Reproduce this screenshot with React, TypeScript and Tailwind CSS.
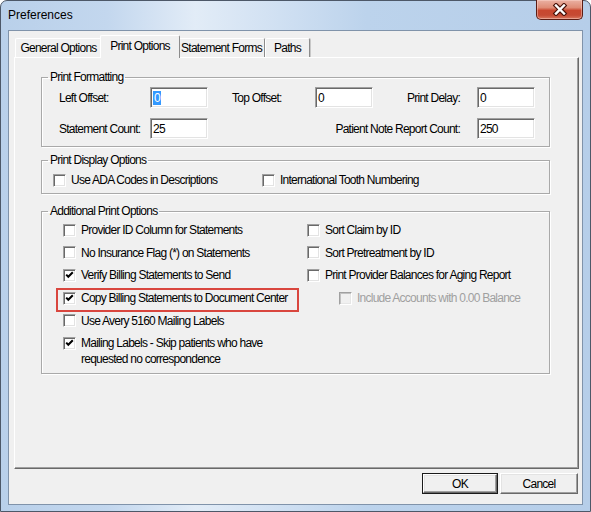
import React from 'react';

const ui = "font-['Liberation_Sans',Arial,sans-serif] text-[12px] tracking-[-0.75px] whitespace-nowrap text-black";

function Check({ checked, disabled }: { checked?: boolean; disabled?: boolean }) {
  return (
    <span
      className={`flex h-[13px] w-[13px] shrink-0 items-center justify-center border border-t-[#a0a0a0] border-l-[#a0a0a0] border-b-white border-r-white ${
        disabled
          ? 'bg-[#f0f0f0] shadow-[inset_1px_1px_0_#c2c2c2,inset_-1px_-1px_0_#e6e6e6]'
          : 'bg-white shadow-[inset_1px_1px_0_#696969,inset_-1px_-1px_0_#e3e3e3]'
      }`}
    >
      {checked && (
        <svg width="9" height="9" viewBox="0 0 9 9">
          <path d="M1.2 3.6 L3.3 5.8 L7.8 1.3" fill="none" stroke="#000" strokeWidth="2" />
        </svg>
      )}
    </span>
  );
}

function Field({ value, selected }: { value: string; selected?: boolean }) {
  return (
    <div className="flex h-[21px] w-[58px] shrink-0 items-center border border-t-[#a0a0a0] border-l-[#a0a0a0] border-b-white border-r-white bg-white pl-[2px] shadow-[inset_1px_1px_0_#696969,inset_-1px_-1px_0_#e3e3e3]">
      {selected ? (
        <span className="bg-[#3399ff] px-[1px] leading-[14px] text-white">{value}</span>
      ) : (
        <span className="leading-[14px]">{value}</span>
      )}
    </div>
  );
}

function Option({
  label,
  checked,
  disabled,
  className = '',
}: {
  label: React.ReactNode;
  checked?: boolean;
  disabled?: boolean;
  className?: string;
}) {
  return (
    <div className={`flex h-[22.6px] items-center gap-[5px] ${className}`}>
      <Check checked={checked} disabled={disabled} />
      <span className={`leading-[16px] ${disabled ? 'text-[#a0a0a0]' : ''}`}>{label}</span>
    </div>
  );
}

function Group({
  title,
  className = '',
  children,
}: {
  title: string;
  className?: string;
  children: React.ReactNode;
}) {
  return (
    <fieldset className={`ml-[26px] w-[509px] border border-[#a9a9a9] shadow-[inset_1px_1px_0_#fff,1px_1px_0_#fff] ${className}`}>
      <legend className="ml-[6px] px-[2px] leading-[14px]">{title}</legend>
      {children}
    </fieldset>
  );
}

function CloseButton() {
  return (
    <div className="-mt-px flex h-[20px] w-[47px] items-center justify-center rounded-b-[5px] border border-t-0 border-[#5c1d14] bg-[linear-gradient(180deg,#eab1a3_0%,#df8c76_40%,#c9472f_55%,#c64a33_80%,#d9785f_100%)] shadow-[inset_0_0_0_1px_rgba(255,220,210,0.45)]">
      <svg width="16" height="13" viewBox="0 0 16 13">
        <path d="M4 2.5 L12 10.5 M12 2.5 L4 10.5" stroke="#4a1209" strokeWidth="4.6" strokeLinecap="square" />
        <path d="M4 2.5 L12 10.5 M12 2.5 L4 10.5" stroke="#ffffff" strokeWidth="2.4" strokeLinecap="square" />
      </svg>
    </div>
  );
}

function Tab({ label, selected, width }: { label: string; selected?: boolean; width: string }) {
  return (
    <div
      className={`flex items-center justify-center rounded-t-[2px] border-t border-l border-r border-t-white border-l-white border-r-[#8c8c8c] bg-[#f0f0f0] ${width} ${
        selected ? 'relative z-10 -mx-[2px] -mb-px h-[23px] pb-[2px]' : 'mt-[3px] h-[19px] shadow-[1px_0_0_#c8c8c8]'
      }`}
    >
      {label}
    </div>
  );
}

function Button({ label, isDefault, width }: { label: string; isDefault?: boolean; width: string }) {
  const inner = (
    <div className="flex h-full w-full items-center justify-center border border-t-white border-l-white border-b-[#696969] border-r-[#696969] bg-[#f0f0f0] shadow-[inset_-1px_-1px_0_#a0a0a0,inset_1px_1px_0_#e3e3e3]">
      {label}
    </div>
  );
  return isDefault ? (
    <div className={`h-[21px] border border-[#1a1a1a] ${width}`}>{inner}</div>
  ) : (
    <div className={`h-[21px] ${width}`}>{inner}</div>
  );
}

export default function App() {
  return (
    <div className="flex h-[512px] w-[591px] flex-col rounded-t-[7px] border border-[#4d5868] bg-[linear-gradient(90deg,#b9d0ea_0%,#c3d7ee_18%,#e2ecf7_33%,#d3e2f3_45%,#bcd3ec_62%,#b6cee9_100%)] px-[7px] pb-[6px]">
      {/* Title bar */}
      <div className="flex h-[29px] items-start justify-between">
        <span className="pt-[6px] font-['Liberation_Sans',Arial,sans-serif] text-[12px] leading-[16px] text-black">
          Preferences
        </span>
        <CloseButton />
      </div>

      {/* Client area */}
      <div className={`flex flex-1 flex-col border border-[#8093aa] bg-[#f0f0f0] pt-[4px] pl-[5px] pr-[3px] ${ui}`}>
        {/* Tabs */}
        <div className="flex h-[22px] items-start pl-[1px]">
          <Tab label="General Options" width="w-[87px]" />
          <Tab label="Print Options" width="w-[80px]" selected />
          <Tab label="Statement Forms" width="w-[87px]" />
          <Tab label="Paths" width="w-[45px]" />
        </div>

        {/* Tab page */}
        <div className="h-[412px] w-[565px] border border-t-white border-l-white border-b-[#696969] border-r-[#696969] bg-[#f0f0f0] pt-[12px] shadow-[inset_-1px_-1px_0_#a0a0a0]">
          <Group title="Print Formatting">
            <div className="flex flex-col gap-[10px] pt-[3px] pb-[7px] pl-[17px]">
              <div className="flex items-center">
                <span className="w-[91px]">Left Offset:</span>
                <Field value="0" selected />
                <span className="ml-[24px] w-[83px]">Top Offset:</span>
                <Field value="0" />
                <span className="w-[104px] pr-[17px] text-right">Print Delay:</span>
                <Field value="0" />
              </div>
              <div className="flex items-center">
                <span className="w-[91px]">Statement Count:</span>
                <Field value="25" />
                <span className="w-[269px] pr-[17px] text-right">Patient Note Report Count:</span>
                <Field value="250" />
              </div>
            </div>
          </Group>

          <Group title="Print Display Options" className="mt-[6px]">
            <div className="flex pt-[5px] pb-[5px] pl-[11px]">
              <div className="flex h-[16px] w-[209px] items-center gap-[5px]">
                <Check />
                <span>Use ADA Codes in Descriptions</span>
              </div>
              <div className="flex h-[16px] items-center gap-[5px]">
                <Check />
                <span>International Tooth Numbering</span>
              </div>
            </div>
          </Group>

          <Group title="Additional Print Options" className="mt-[10px]">
            <div className="flex pt-[1px] pb-[6px] pl-[21px]">
              <div className="flex w-[244px] flex-col">
                <Option label="Provider ID Column for Statements" />
                <Option label="No Insurance Flag (*) on Statements" />
                <Option label="Verify Billing Statements to Send" checked />
                <div className="relative">
                  <Option label="Copy Billing Statements to Document Center" checked />
                  <div className="absolute -left-[7px] top-[1px] h-[24px] w-[243px] border-[2.5px] border-[#d9463e]" />
                </div>
                <Option label="Use Avery 5160 Mailing Labels" />
                <div className="flex items-start gap-[5px] pt-[3px]">
                  <span className="mt-[2px]">
                    <Check checked />
                  </span>
                  <span className="leading-[16px]">
                    Mailing Labels - Skip patients who have
                    <br />
                    requested no correspondence
                  </span>
                </div>
              </div>
              <div className="flex flex-col">
                <Option label="Sort Claim by ID" />
                <Option label="Sort Pretreatment by ID" />
                <Option label="Print Provider Balances for Aging Report" />
                <Option label="Include Accounts with 0.00 Balance" disabled className="ml-[32px]" />
              </div>
            </div>
          </Group>
        </div>

        {/* Buttons */}
        <div className="mt-[4px] flex justify-end gap-[2px] pr-[1px]">
          <Button label="OK" width="w-[76px]" isDefault />
          <Button label="Cancel" width="w-[78px]" />
        </div>
      </div>
    </div>
  );
}
